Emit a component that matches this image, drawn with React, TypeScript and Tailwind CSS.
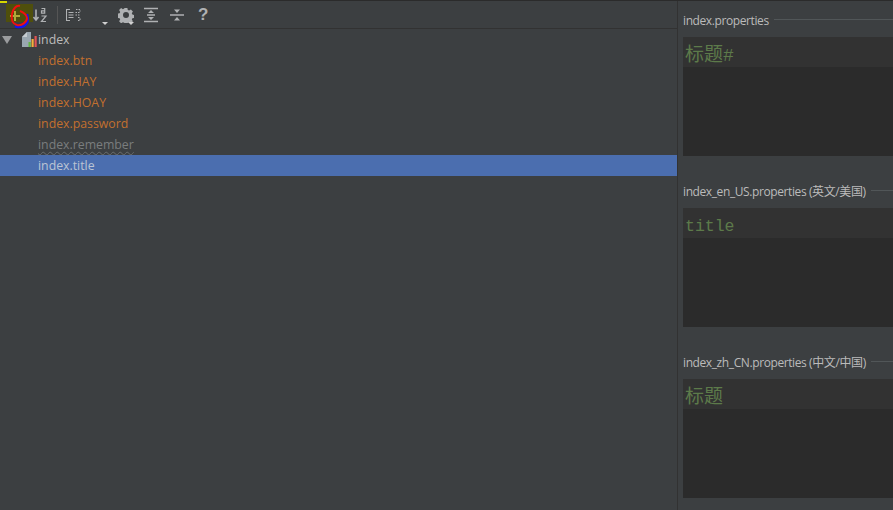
const keys = [
  { name: 'index.btn', cls: 'text-[#c2702f]' },
  { name: 'index.HAY', cls: 'text-[#c2702f]' },
  { name: 'index.HOAY', cls: 'text-[#c2702f]' },
  { name: 'index.password', cls: 'text-[#c2702f]' },
  { name: 'index.remember', cls: 'text-[#7a7d7e] underline decoration-wavy decoration-[#6a6d6e] decoration-1 underline-offset-2' },
  { name: 'index.title', cls: 'text-[#bbc4d4]', selected: true },
]

const sections = [
  { label: 'index.properties', value: '标题', hash: true, mono: false },
  { label: 'index_en_US.properties (英文/美国)', value: 'title', hash: false, mono: true },
  { label: 'index_zh_CN.properties (中文/中国)', value: '标题', hash: false, mono: false },
]

function SortIcon() {
  return (
    <svg width="16" height="16" viewBox="0 0 16 16" fill="none">
      <path d="M4 2.5v10M1.5 10l2.5 3 2.5-3" stroke="#afb1b3" strokeWidth="1.6" />
      <path d="M9.5 1.5h3.2v4.6h-3.2v-2.2h3.2M9.5 9h4.5l-4.5 5.5h4.5" stroke="#afb1b3" strokeWidth="1.2" />
    </svg>
  )
}

function GroupIcon() {
  return (
    <svg width="15" height="16" viewBox="0 0 15 16" fill="none">
      <path d="M4 2.5H.5v11H4" stroke="#afb1b3" strokeWidth="1.1" />
      <path d="M2.5 5.5h5M2.5 8h5M2.5 10.5h5" stroke="#afb1b3" strokeWidth="1.1" />
      <path d="M9.5 5.5h1.5M12 5.5h1.5M9.5 8h1.5M12 8h1.5M13.5 10.5h-1.5" stroke="#afb1b3" strokeWidth="1.1" />
      <path d="M10 2.5h4v2M14 11.5v2h-3" stroke="#afb1b3" strokeWidth="1.1" strokeDasharray="1.5 1" />
    </svg>
  )
}

function GearIcon() {
  return (
    <svg width="16" height="16" viewBox="0 0 16 16">
      <path
        fillRule="evenodd"
        fill="#afb1b3"
        d="M6.6 1h2.8l.4 2 1.3.6 1.8-1.1 2 2-1.1 1.8.6 1.3 2 .4v2.8l-2 .4-.6 1.3 1.1 1.8-2 2-1.8-1.1-1.3.6-.4 2H6.6l-.4-2-1.3-.6-1.8 1.1-2-2 1.1-1.8-.6-1.3-2-.4V6.6l2-.4.6-1.3L1.1 3.1l2-2 1.8 1.1 1.3-.6zM8 5a3 3 0 1 0 0 6 3 3 0 0 0 0-6z"
      />
    </svg>
  )
}

function ExpandIcon() {
  return (
    <svg width="14" height="16" viewBox="0 0 14 16" fill="none">
      <path d="M0 1.5h14M0 14.5h14M3 8h8" stroke="#afb1b3" strokeWidth="1.5" />
      <path d="M7 3l3 3H4zM7 13l3-3H4z" fill="#afb1b3" />
    </svg>
  )
}

function CollapseIcon() {
  return (
    <svg width="14" height="16" viewBox="0 0 14 16" fill="none">
      <path d="M0 8h14" stroke="#afb1b3" strokeWidth="1.5" />
      <path d="M4 2.5h6L7 6zM4 13.5h6L7 10z" fill="#afb1b3" />
    </svg>
  )
}

function BundleIcon() {
  return (
    <svg width="15" height="16" viewBox="0 0 15 16">
      <path d="M0 5l5-5h4v15H0z" fill="#9aa7b0" />
      <path d="M0 5h5V0z" fill="#c5ccd1" />
      <rect x="6.5" y="10" width="2.2" height="5" fill="#62b543" />
      <rect x="9.5" y="7" width="2.2" height="8" fill="#f4af3d" />
      <rect x="12.5" y="4" width="2.2" height="11" fill="#e05555" />
    </svg>
  )
}

function Marks() {
  return (
    <svg width="40" height="32" viewBox="0 0 40 32" fill="none" className="absolute left-0 top-0">
      <rect x="0" y="0" width="7" height="2" fill="#d6d600" />
      <rect x="6" y="3" width="27" height="18" fill="#4f4f0c" />
      <path d="M10 15h10M15 10v10" stroke="#b0a93a" strokeWidth="2" />
      <path d="M15 25c4 2 9 1 11-2 2-2 2-6 1-10" stroke="#1515f0" strokeWidth="2.6" />
      <path d="M20 5C16 4 13 8 12 13c-1 6 1 10 5 11 5 1 10-3 10-7 0-3-4-6-7-7" stroke="#f01010" strokeWidth="2" />
    </svg>
  )
}

export default function App() {
  return (
    <div className="w-[893px] h-[510px] overflow-hidden flex bg-[#3c3f41] border-t border-[#2b2b2b] font-['Liberation_Sans','Noto_Sans_CJK_SC',sans-serif]">
      <div className="w-[677px] shrink-0 flex flex-col">
        {/* toolbar */}
        <div className="relative h-[28px] flex items-center border-b border-[#323232] shrink-0">
          <Marks />
          <div className="flex items-center pl-[32px]">
            <SortIcon />
            <div className="w-px h-[18px] bg-[#555] ml-[9px] mr-[8px]" />
            <GroupIcon />
            <div className="relative w-[37px] h-[16px]">
              <div className="absolute left-[21px] top-[15px] w-0 h-0 border-x-[3px] border-x-transparent border-t-[3px] border-t-[#d0d0d0]" />
            </div>
            <div className="relative">
              <GearIcon />
              <div className="absolute left-[10px] top-[15px] w-0 h-0 border-x-[3px] border-x-transparent border-t-[3px] border-t-[#d0d0d0]" />
            </div>
            <div className="ml-[10px]"><ExpandIcon /></div>
            <div className="ml-[12px]"><CollapseIcon /></div>
            <span className="ml-[14px] w-[12px] text-[17px] leading-none font-bold text-[#afb1b3]">?</span>
          </div>
        </div>

        {/* tree */}
        <div className="text-[12.3px] leading-[21px] font-['Open_Sans','Noto_Sans_CJK_SC',sans-serif]">
          <div className="flex items-center h-[21px]">
            <div className="ml-[2px] w-0 h-0 border-x-[5px] border-x-transparent border-t-[8px] border-t-[#9a9c9e]" />
            <div className="ml-[10px]"><BundleIcon /></div>
            <span className="ml-[1px] text-[#bbbbbb]">index</span>
          </div>
          {keys.map((k) => (
            <div key={k.name} className={`h-[21px] pl-[38px] ${k.selected ? 'bg-[#4b6eaf]' : ''}`}>
              <span className={k.cls}>{k.name}</span>
            </div>
          ))}
        </div>
      </div>

      {/* editors */}
      <div className="flex-1 min-w-0 border-l border-[#323232] pl-[5px] pt-[8px]">
        {sections.map((s) => (
          <div key={s.label} className="h-[171px]">
            <div className="flex items-center h-[21px] mb-[7px] text-[12px] text-[#bbbbbb] font-['Open_Sans','Noto_Sans_CJK_SC',sans-serif] whitespace-nowrap">
              <span className="pt-[2px] tracking-[-0.4px]">{s.label}</span>
              <div className="flex-1 h-px bg-[#515658] ml-[5px]" />
            </div>
            <div className="h-[119px] bg-[#2b2b2b]">
              {s.mono ? (
                <div className="h-[30px] bg-[#323232] pl-[2px] font-['Liberation_Mono',monospace] text-[16.5px] leading-[38px] text-[#5d7a4a]">
                  {s.value}
                </div>
              ) : (
                <div className="h-[30px] bg-[#323232] pl-[2px] font-['Noto_Sans_CJK_SC',sans-serif] text-[19px] leading-[31px] text-[#5d7a4a]">
                  {s.value}
                  {s.hash && <span className="font-['Liberation_Mono',monospace] text-[18px]">#</span>}
                </div>
              )}
            </div>
          </div>
        ))}
      </div>
    </div>
  )
}
